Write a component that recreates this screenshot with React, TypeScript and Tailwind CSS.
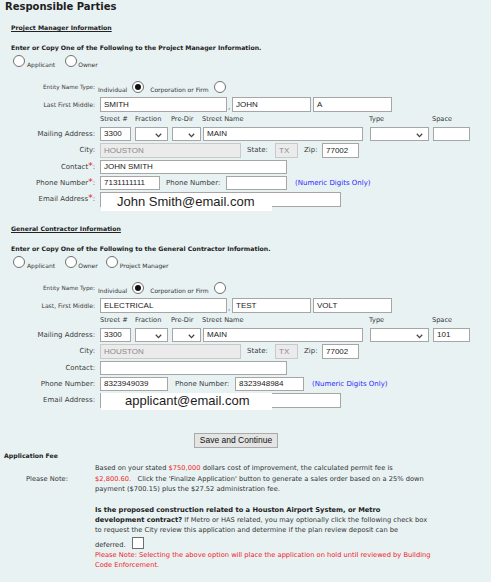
import React from "react";

const inputFont = "font-['Liberation_Sans',Arial,sans-serif]";

function Box({
  className = "",
  value = "",
  disabled = false,
}: {
  className?: string;
  value?: string;
  disabled?: boolean;
}) {
  return (
    <div
      className={`box-border flex h-full shrink-0 items-center border pl-[3px] text-[8px] ${inputFont} ${
        disabled
          ? "border-[#c9c9c9] bg-[#ebebeb] text-[#8a8a8a]"
          : "border-[#a6a6a6] bg-white text-[#1a1a1a]"
      } ${className}`}
    >
      {value}
    </div>
  );
}

function Select({ className = "" }: { className?: string }) {
  return (
    <div
      className={`relative box-border h-full shrink-0 border border-[#a6a6a6] bg-white ${className}`}
    >
      <svg
        className="absolute right-[5px] bottom-[2px]"
        width="7"
        height="5"
        viewBox="0 0 7 5"
      >
        <polyline
          points="0.8,0.8 3.5,3.6 6.2,0.8"
          fill="none"
          stroke="#444"
          strokeWidth="1.3"
        />
      </svg>
    </div>
  );
}

function Radio({ checked = false }: { checked?: boolean }) {
  return (
    <span className="box-border flex h-[12px] w-[12px] shrink-0 items-center justify-center rounded-full border border-[#707070] bg-white">
      {checked && <span className="h-[6px] w-[6px] rounded-full bg-[#111]" />}
    </span>
  );
}

function Label({
  children,
  className = "text-[7px]",
}: {
  children: React.ReactNode;
  className?: string;
}) {
  return (
    <div className={`w-[97px] shrink-0 pr-[2px] text-right text-[#3a3a3a] ${className}`}>
      {children}
    </div>
  );
}

const Star = () => <span className="text-[9px] leading-[7px] text-[#e8202a]">*</span>;

function Section({
  title,
  who,
  pm,
  last,
  first,
  middle,
  space,
  contact,
  phone1,
  phone2,
  email,
  required,
  alt,
}: {
  title: string;
  who: string;
  pm: boolean;
  last: string;
  first: string;
  middle: string;
  space: string;
  contact: string;
  phone1: string;
  phone2: string;
  email: string;
  required: boolean;
  alt: boolean;
}) {
  return (
    <div>
      <div className="ml-[11px] h-[14px] text-[6.2px] leading-[14px] font-bold text-[#222] underline underline-offset-[1px]">
        {title}
      </div>
      <div className="mt-[7px] ml-[11px] h-[12px] text-[6.2px] leading-[12px] font-bold text-[#222]">
        Enter or Copy One of the Following to the {who} Information.
      </div>
      <div className="mt-[1px] ml-[13px] flex h-[12px] items-center text-[6px] text-[#333]">
        <Radio />
        <span className="mt-[6px] ml-[2px]">Applicant</span>
        <span className="ml-[10px]">
          <Radio />
        </span>
        <span className="mt-[6px] ml-[1px]">Owner</span>
        {pm && (
          <>
            <span className="ml-[8px]">
              <Radio />
            </span>
            <span className="mt-[6px] ml-[2px]">Project Manager</span>
          </>
        )}
      </div>

      <div className="mt-[14px] flex h-[12px] items-center text-[#333]">
        <Label className="text-[5.7px]">Entity Name Type:</Label>
        <span className="mt-[5px] ml-[1px] text-[6px]">Individual</span>
        <span className="ml-[5px]">
          <Radio checked />
        </span>
        <span className="mt-[5px] ml-[6px] text-[6px]">Corporation or Firm</span>
        <span className="ml-[5px]">
          <Radio />
        </span>
      </div>

      <div className="mt-[4px] flex h-[15px] items-center">
        <Label className="text-[6.1px]">{alt ? "Last, First Middle:" : "Last First Middle:"}</Label>
        <Box className="ml-[3px] w-[127px]" value={last} />
        <span className="w-[5px] self-end pl-[1px] text-[7px] leading-[9px] text-[#333]">,</span>
        <Box className="w-[79px]" value={first} />
        <Box className="ml-[2px] w-[79px]" value={middle} />
      </div>

      <div className="mt-[3px] flex h-[10px] items-center text-[6.6px] text-[#333]">
        <div className="ml-[100px] w-[35px]">Street #</div>
        <div className="w-[36px]">Fraction</div>
        <div className="w-[31px]">Pre-Dir</div>
        <div className="w-[167px]">Street Name</div>
        <div className="w-[63px]">Type</div>
        <div>Space</div>
      </div>

      <div className="mt-[2px] flex h-[14px] items-center">
        <Label>Mailing Address:</Label>
        <Box className="ml-[3px] w-[31px]" value="3300" />
        <Select className="ml-[4px] w-[33px]" />
        <Select className="ml-[4px] w-[29px]" />
        <Box className="ml-[2px] w-[160px]" value="MAIN" />
        <Select className="ml-[7px] w-[59px]" />
        <Box className="ml-[4px] w-[37px]" value={space} />
      </div>

      <div className="mt-[2px] flex h-[15px] items-center text-[7px] text-[#3a3a3a]">
        <Label>City:</Label>
        <Box className="ml-[3px] w-[141px]" value="HOUSTON" disabled />
        <span className="ml-[6px] w-[28px]">State:</span>
        <Box className="w-[23px]" value="TX" disabled />
        <span className="ml-[6px] w-[18px]">Zip:</span>
        <Box className="w-[37px]" value="77002" />
      </div>

      <div className="mt-[2px] flex h-[14px] items-center">
        <Label>
          Contact{required && <Star />}:
        </Label>
        <Box className="ml-[3px] w-[187px]" value={contact} />
      </div>

      <div className="mt-[2px] flex h-[14px] items-center text-[7px] text-[#3a3a3a]">
        <Label>
          Phone Number{required && <Star />}:
        </Label>
        <Box className={alt ? "ml-[3px] w-[68px]" : "ml-[3px] w-[60px]"} value={phone1} />
        <span className={alt ? "ml-[7px] w-[60px]" : "ml-[6px] w-[60px]"}>Phone Number:</span>
        <Box className={alt ? "w-[69px]" : "w-[61px]"} value={phone2} />
        <span className="ml-[8px] text-[#2a2aff]">(Numeric Digits Only)</span>
      </div>

      <div className="mt-[2px] flex h-[15px] items-center">
        <Label>
          Email Address{required && <Star />}:
        </Label>
        <div className="relative ml-[3px] h-full w-[241px]">
          <Box className="w-full" />
          <div
            className={`absolute left-[1px] h-[17px] w-[171px] bg-white text-[13px] leading-[15px] text-[#1c1c1c] ${inputFont} ${
              alt ? "top-[0px] pl-[24px]" : "top-[2px] pl-[16px]"
            }`}
          >
            {email}
          </div>
        </div>
      </div>
    </div>
  );
}

export default function App() {
  return (
    <div className="min-h-[582px] w-full bg-[#e9f2f3] font-['DejaVu_Sans',Verdana,sans-serif] text-[#222]">
      <div className="ml-[5px] h-[14px] text-[10px] leading-[14px] font-bold text-[#1e1e1e]">
        Responsible Parties
      </div>
      <div className="mt-[7px]">
        <Section
          title="Project Manager Information"
          who="Project Manager"
          pm={false}
          last="SMITH"
          first="JOHN"
          middle="A"
          space=""
          contact="JOHN SMITH"
          phone1="7131111111"
          phone2=""
          email="John Smith@email.com"
          required
          alt={false}
        />
      </div>
      <div className="mt-[15px]">
        <Section
          title="General Contractor Information"
          who="General Contractor"
          pm
          last="ELECTRICAL"
          first="TEST"
          middle="VOLT"
          space="101"
          contact=""
          phone1="8323949039"
          phone2="8323948984"
          email="applicant@email.com"
          required={false}
          alt
        />
      </div>

      <div className="mt-[25px] ml-[194px] flex h-[15px] w-[84px] items-center justify-center border border-[#a9a9a9] bg-[#e4e4e4] text-[8.5px] text-[#111] font-['Liberation_Sans',Arial,sans-serif]">
        Save and Continue
      </div>

      <div className="mt-[3px] ml-[4px] h-[10px] text-[6.2px] leading-[10px] font-bold text-[#222]">
        Application Fee
      </div>

      <div className="mt-[2px] flex text-[6.7px] text-[#333]">
        <div className="w-[95px] shrink-0 pt-[10.5px] pl-[26px] leading-[10.5px]">Please Note:</div>
        <div className="w-[385px]">
          <p className="leading-[10.5px]">
            Based on your stated <span className="text-[#ee1c25]">$750,000</span> dollars cost of improvement, the
            calculated permit fee is
            <br />
            <span className="text-[#ee1c25]">$2,800.60.</span>&nbsp;&nbsp; Click the 'Finalize Application' button to
            generate a sales order based on a 25% down
            <br />
            payment ($700.15) plus the $27.52 administration fee.
          </p>
          <p className="mt-[10.5px] leading-[10px]">
            <b className="text-[#222]">
              Is the proposed construction related to a Houston Airport System, or Metro
              <br />
              development contract?
            </b>{" "}
            If Metro or HAS related, you may optionally click the following check box
            <br />
            to request the City review this application and determine if the plan review deposit can be
          </p>
          <div className="flex h-[15px] items-end leading-[10px]">
            <span>deferred.</span>
            <span className="mb-[1px] ml-[6px] box-border h-[12px] w-[12px] border border-[#6e6e6e] bg-white" />
          </div>
          <p className="leading-[10px] text-[#ee1c25]">
            Please Note: Selecting the above option will place the application on hold until reviewed by Building
            <br />
            Code Enforcement.
          </p>
        </div>
      </div>
    </div>
  );
}
